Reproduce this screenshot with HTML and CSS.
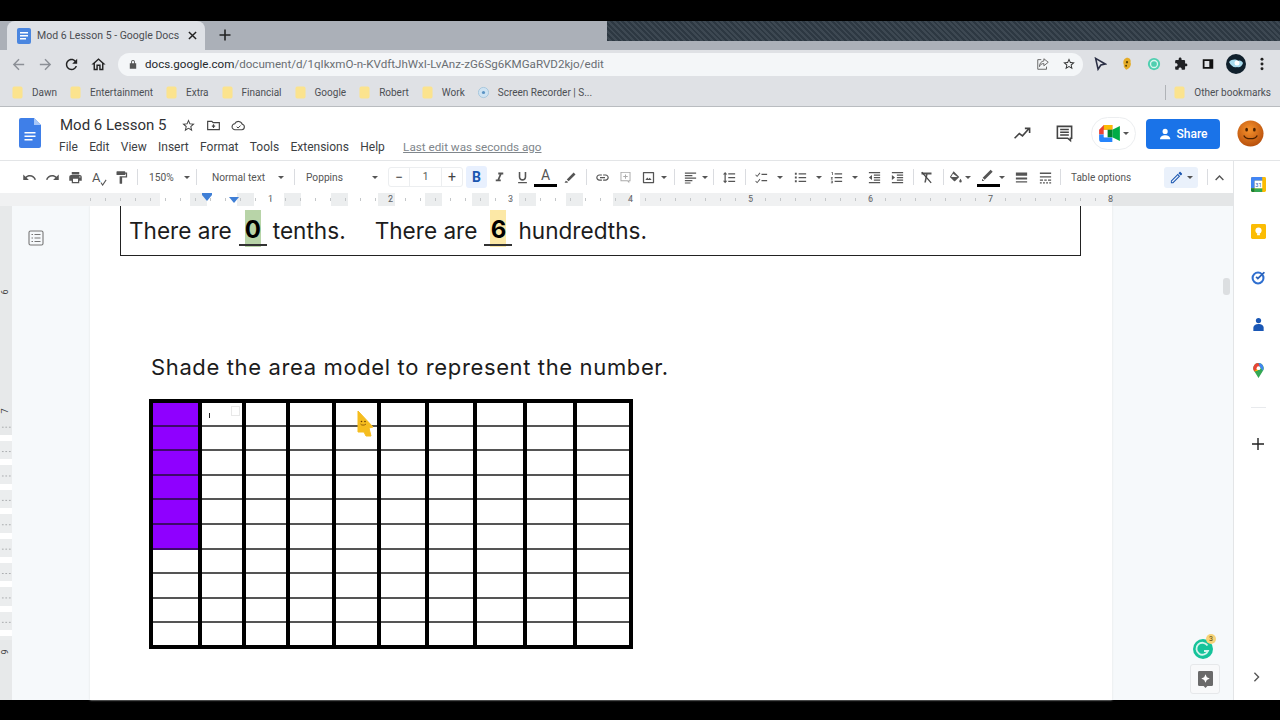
FILE: index.html
```html
<!DOCTYPE html>
<html>
<head>
  <meta charset="UTF-8">
  <title>Mod 6 Lesson 5 - Google Docs</title>
  <link rel="stylesheet" href="styles.css">
</head>
<body>
  <svg class="defs" width="0" height="0">
    <symbol id="i-folder" viewBox="0 0 12 14"><rect x="0.5" y="0.5" width="11" height="13" rx="2" fill="#fbe38e"/></symbol>
    <symbol id="i-undo" viewBox="0 0 24 24"><path d="M12.5 8c-2.65 0-5.05.99-6.9 2.6L2 7v9h9l-3.62-3.62c1.39-1.16 3.16-1.88 5.12-1.88 3.54 0 6.55 2.31 7.6 5.5l2.37-.78C21.08 11.03 17.15 8 12.5 8z"/></symbol>
    <symbol id="i-redo" viewBox="0 0 24 24"><path d="M18.4 10.6C16.55 8.99 14.15 8 11.5 8c-4.65 0-8.58 3.03-9.96 7.22L3.9 16c1.05-3.19 4.05-5.5 7.6-5.5 1.95 0 3.73.72 5.12 1.88L13 16h9V7l-3.6 3.6z"/></symbol>
    <symbol id="i-print" viewBox="0 0 24 24"><path d="M19 8H5c-1.66 0-3 1.34-3 3v6h4v4h12v-4h4v-6c0-1.66-1.34-3-3-3zm-3 11H8v-5h8v5zm3-7c-.55 0-1-.45-1-1s.45-1 1-1 1 .45 1 1-.45 1-1 1zm-1-9H6v4h12V3z"/></symbol>
    <symbol id="i-rlist" viewBox="0 0 24 24"><path d="M9 5h12v2H9zM9 11h12v2H9zM9 17h12v2H9zM3 4.5h3v3H3zM3 10.5h3v3H3zM3 16.5h3v3H3z"/></symbol>
  </svg>

  <div class="tabstrip">
    <div class="tab">
      <svg class="tab-icon" viewBox="0 0 14 16"><rect width="14" height="16" rx="2" fill="#4a86e0"/><path d="M3 4h8v1.4H3zM3 7h8v1.4H3zM3 10h6v1.4H3z" fill="#fff"/></svg>
      <span class="tab-title">Mod 6 Lesson 5 - Google Docs</span>
      <svg class="tab-close" viewBox="0 0 10 10"><path d="M1 1l8 8M9 1l-8 8" stroke="#222" stroke-width="1.6"/></svg>
    </div>
    <svg class="tab-plus" viewBox="0 0 12 12"><path d="M6 .5v11M.5 6h11" stroke="#222" stroke-width="1.6"/></svg>
    <div class="hatch"></div>
  </div>

  <div class="navbar">
    <svg class="nav-icon dim" viewBox="0 0 24 24"><path d="M20 11H7.83l5.59-5.59L12 4l-8 8 8 8 1.41-1.41L7.83 13H20v-2z"/></svg>
    <svg class="nav-icon dim" viewBox="0 0 24 24"><path d="M12 4l-1.41 1.41L16.17 11H4v2h12.17l-5.58 5.59L12 20l8-8z"/></svg>
    <svg class="nav-icon" viewBox="0 0 24 24"><path d="M17.65 6.35C16.2 4.9 14.21 4 12 4c-4.42 0-7.99 3.58-7.99 8s3.57 8 7.99 8c3.73 0 6.84-2.55 7.73-6h-2.08c-.82 2.33-3.04 4-5.65 4-3.31 0-6-2.69-6-6s2.69-6 6-6c1.66 0 3.14.69 4.22 1.78L13 11h7V4l-2.35 2.35z"/></svg>
    <svg class="nav-icon" viewBox="0 0 24 24"><path d="M12 5.69l5 4.5V18h-2v-6H9v6H7v-7.81l5-4.5M12 3L2 12h3v8h6v-6h2v6h6v-8h3L12 3z"/></svg>
    <div class="omnibox">
      <svg class="lock" viewBox="0 0 10 12"><path d="M2.5 5V3.5a2.5 2.5 0 015 0V5H9v7H1V5zM3.6 5h2.8V3.5a1.4 1.4 0 00-2.8 0z" fill="#555"/></svg>
      <span class="url"><b>docs.google.com</b>/document/d/1qIkxmO-n-KVdftJhWxI-LvAnz-zG6Sg6KMGaRVD2kjo/edit</span>
      <svg class="omni-icon" viewBox="0 0 16 16"><path d="M9 2l5 4-5 4V7.5C6 7.5 4.5 9 4 11c0-4 2-6 5-6.5zM6 3H2v11h10v-3" fill="none" stroke="#666" stroke-width="1.1"/></svg>
      <svg class="omni-icon" viewBox="0 0 24 24"><path d="M22 9.24l-7.19-.62L12 2 9.19 8.63 2 9.24l5.46 4.73L5.82 21 12 17.27 18.18 21l-1.63-7.03L22 9.24zM12 15.4l-3.76 2.27 1-4.28-3.32-2.88 4.38-.38L12 6.1l1.71 4.04 4.38.38-3.32 2.88 1 4.28L12 15.4z" fill="#333"/></svg>
    </div>
    <div class="extensions">
      <svg class="ext" viewBox="0 0 16 16"><path d="M3 1.5l11 6.5-5 1.2L5.8 14z" fill="none" stroke="#2b2f45" stroke-width="1.8"/></svg>
      <svg class="ext" viewBox="0 0 16 16"><path d="M7 1c4-.5 6 2.5 5 5 1.5 3-1 7.5-5 8.5-1-2-3.5-3-2.5-5.5C3 6 4 2 7 1z" fill="#e5ac27"/><circle cx="8" cy="6" r="1.3" fill="#5b4300"/><circle cx="7" cy="10" r="1.1" fill="#5b4300"/></svg>
      <svg class="ext" viewBox="0 0 16 16"><circle cx="8" cy="8" r="7" fill="#4fcfb0"/><circle cx="8" cy="8" r="4" fill="none" stroke="#d8f6ee" stroke-width="1.5"/></svg>
      <svg class="ext" viewBox="0 0 24 24"><path d="M20.5 11H19V7c0-1.1-.9-2-2-2h-4V3.5C13 2.12 11.88 1 10.5 1S8 2.12 8 3.5V5H4c-1.1 0-1.99.9-1.99 2v3.8H3.5c1.49 0 2.7 1.21 2.7 2.7s-1.21 2.7-2.7 2.7H2V20c0 1.1.9 2 2 2h3.8v-1.5c0-1.49 1.21-2.7 2.7-2.7 1.49 0 2.7 1.21 2.7 2.7V22H17c1.1 0 2-.9 2-2v-4h1.5c1.38 0 2.5-1.12 2.5-2.5S21.88 11 20.5 11z" fill="#202124"/></svg>
      <svg class="ext" viewBox="0 0 16 16"><path d="M2 2.5h12v11H2zM9.5 4.5H4v7h5.5z" fill="#111" fill-rule="evenodd"/></svg>
      <svg class="ext profile" viewBox="0 0 20 20"><circle cx="10" cy="10" r="10" fill="#10202c"/><path d="M3 8c3-3 7-3 9-1 2-1 4 0 5 2-1 3-3 5-6 4-3 1-6-1-8-5z" fill="#a9dcee"/><circle cx="11" cy="9" r="2.5" fill="#fff"/></svg>
      <svg class="ext kebab" viewBox="0 0 4 16"><circle cx="2" cy="2.5" r="1.7" fill="#222"/><circle cx="2" cy="8" r="1.7" fill="#222"/><circle cx="2" cy="13.5" r="1.7" fill="#222"/></svg>
    </div>
  </div>

  <div class="bookmarks">
    <a class="mark"><svg><use href="#i-folder"/></svg>Dawn</a>
    <a class="mark"><svg><use href="#i-folder"/></svg>Entertainment</a>
    <a class="mark"><svg><use href="#i-folder"/></svg>Extra</a>
    <a class="mark"><svg><use href="#i-folder"/></svg>Financial</a>
    <a class="mark"><svg><use href="#i-folder"/></svg>Google</a>
    <a class="mark"><svg><use href="#i-folder"/></svg>Robert</a>
    <a class="mark"><svg><use href="#i-folder"/></svg>Work</a>
    <a class="mark"><svg viewBox="0 0 14 14"><circle cx="7" cy="7" r="6.5" fill="#cfe3f2" stroke="#9cc0da"/><circle cx="7" cy="7" r="2" fill="#5b93c4"/></svg>Screen Recorder | S...</a>
    <span class="mark-sep"></span>
    <a class="mark last"><svg><use href="#i-folder"/></svg>Other bookmarks</a>
  </div>

  <header class="doc-header">
    <svg class="doc-logo" viewBox="0 0 22 30"><path d="M2 0h13l7 7v21a2 2 0 01-2 2H2a2 2 0 01-2-2V2a2 2 0 012-2z" fill="#3f7fe8"/><path d="M15 0l7 7h-7z" fill="#a9c7f7"/><path d="M5.5 14h11v1.6h-11zM5.5 17.5h11v1.6h-11zM5.5 21h8v1.6h-8z" fill="#fff"/></svg>
    <div class="doc-meta">
      <div class="doc-title-row">
        <span class="doc-title">Mod 6 Lesson 5</span>
        <svg class="title-icon" viewBox="0 0 24 24"><path d="M22 9.24l-7.19-.62L12 2 9.19 8.63 2 9.24l5.46 4.73L5.82 21 12 17.27 18.18 21l-1.63-7.03L22 9.24zM12 15.4l-3.76 2.27 1-4.28-3.32-2.88 4.38-.38L12 6.1l1.71 4.04 4.38.38-3.32 2.88 1 4.28L12 15.4z" fill="#444"/></svg>
        <svg class="title-icon" viewBox="0 0 18 18"><path d="M2 4h5l1.5 1.5H16V14H2z" fill="none" stroke="#444" stroke-width="1.4"/><path d="M9 7.5v4.5M7 9.7h4" stroke="#444" stroke-width="1.4"/></svg>
        <svg class="title-icon" viewBox="0 0 18 18"><path d="M5 14a3.5 3.5 0 01-.5-7 4.8 4.8 0 019 .5 3.3 3.3 0 01-.5 6.5z" fill="none" stroke="#444" stroke-width="1.3"/><path d="M6.8 10.5l1.7 1.5 3-3" fill="none" stroke="#444" stroke-width="1.2"/></svg>
      </div>
      <nav class="menu">
        <span>File</span><span>Edit</span><span>View</span><span>Insert</span><span>Format</span><span>Tools</span><span>Extensions</span><span>Help</span>
        <a class="last-edit">Last edit was seconds ago</a>
      </nav>
    </div>
    <div class="doc-actions">
      <svg class="act-icon" viewBox="0 0 24 24"><path d="M2 18l6-6 4 3 8-9M15 5.5h6v6" fill="none" stroke="#444" stroke-width="2"/></svg>
      <svg class="act-icon comment" viewBox="0 0 24 24"><path d="M3 3h18v15h-1.5v3L16 18H3z" fill="none" stroke="#444" stroke-width="2"/><path d="M6.5 7h11M6.5 10.5h11M6.5 14h11" stroke="#444" stroke-width="1.8"/></svg>
      <div class="meet">
        <svg viewBox="0 0 22 18" class="meet-logo"><path d="M0 5l5-5h9v5H5v5H0z" fill="#ea4335"/><path d="M0 10h5v3h9v5H3a3 3 0 01-3-3z" fill="#2684fc"/><path d="M5 5h9v8H5z" fill="#fff"/><path d="M5 0h9v5H5z" fill="#fbbc04"/><path d="M14 5l8-4v16l-8-4z" fill="#00ac47"/><path d="M9 5h5v8H9z" fill="#00832d"/></svg>
        <i class="caret"></i>
      </div>
      <button class="share">
        <svg viewBox="0 0 16 14"><circle cx="7" cy="4" r="3" fill="#fff"/><path d="M1 13c0-3 3-4.5 6-4.5S13 10 13 13z" fill="#fff"/></svg>
        Share
      </button>
      <svg class="avatar" viewBox="0 0 28 28">
        <defs><radialGradient id="smile" cx="45%" cy="35%" r="65%"><stop offset="0" stop-color="#f7922c"/><stop offset="1" stop-color="#b8500c"/></radialGradient></defs>
        <circle cx="14" cy="14" r="13.5" fill="url(#smile)"/>
        <ellipse cx="10" cy="10" rx="1.4" ry="2" fill="#4a2000"/><ellipse cx="18" cy="10" rx="1.4" ry="2" fill="#4a2000"/>
        <path d="M7 16c2 4.5 12 4.5 14 0" fill="none" stroke="#4a2000" stroke-width="1.4"/>
      </svg>
    </div>
  </header>

  <div class="toolbar">
    <svg class="tb"><use href="#i-undo"/></svg>
    <svg class="tb"><use href="#i-redo"/></svg>
    <svg class="tb"><use href="#i-print"/></svg>
    <span class="tb spell">A<svg viewBox="0 0 8 8"><path d="M1 4l2 3 4-6" fill="none" stroke="#555" stroke-width="1.2"/></svg></span>
    <svg class="tb" viewBox="0 0 24 24"><path d="M18 4V3a1 1 0 00-1-1H5a1 1 0 00-1 1v4a1 1 0 001 1h12a1 1 0 001-1V6h1v4H9v11a1 1 0 001 1h2a1 1 0 001-1v-9h8V4z"/></svg>
    <i class="sep"></i>
    <div class="pick p-zoom"><span>150%</span><i class="caret"></i></div>
    <i class="sep"></i>
    <div class="pick p-style"><span>Normal text</span><i class="caret"></i></div>
    <i class="sep"></i>
    <div class="pick p-font"><span>Poppins</span><i class="caret"></i></div>
    <div class="size-box">
      <span class="size-btn">&minus;</span><span class="size-val">1</span><span class="size-btn">+</span>
    </div>
    <span class="tb fmt bold">B</span>
    <svg class="tb" viewBox="0 0 24 24"><path d="M10 4v3h2.21l-3.42 8H6v3h8v-3h-2.21l3.42-8H18V4z"/></svg>
    <svg class="tb" viewBox="0 0 24 24"><path d="M12 17c3.31 0 6-2.69 6-6V3h-2.5v8c0 1.93-1.57 3.5-3.5 3.5S8.5 12.93 8.5 11V3H6v8c0 3.31 2.69 6 6 6zm-7 2v2h14v-2H5z"/></svg>
    <span class="tb text-color">A</span>
    <svg class="tb marker" viewBox="0 0 24 24"><path d="M6 15l3 3 11-11-3-3zM4.5 17l-2 3.5h4.5l1.2-1.2z"/></svg>
    <i class="sep"></i>
    <svg class="tb" viewBox="0 0 24 24"><path d="M3.9 12c0-1.71 1.39-3.1 3.1-3.1h4V7H7c-2.76 0-5 2.24-5 5s2.24 5 5 5h4v-1.9H7c-1.71 0-3.1-1.39-3.1-3.1zM8 13h8v-2H8v2zm9-6h-4v1.9h4c1.71 0 3.1 1.39 3.1 3.1s-1.39 3.1-3.1 3.1h-4V17h4c2.76 0 5-2.24 5-5s-2.24-5-5-5z"/></svg>
    <svg class="tb faint" viewBox="0 0 24 24"><path d="M4 3h16v15h-2v3l-3-3H4zM5.5 4.5v12h10.1l1 1v-1h1.9v-12zM11.2 7h1.6v2.7h2.7v1.6h-2.7V14h-1.6v-2.7H8.5V9.700h2.7z" fill-rule="evenodd"/></svg>
    <svg class="tb" viewBox="0 0 24 24"><path d="M4 3h16a1 1 0 011 1v16a1 1 0 01-1 1H4a1 1 0 01-1-1V4a1 1 0 011-1zm1 2v14h14V5zM7 16l3-4 2 2.5 2-2 3 3.5z" fill-rule="evenodd"/></svg>
    <i class="caret solo"></i>
    <i class="sep"></i>
    <svg class="tb" viewBox="0 0 24 24"><path d="M3 4h18v2H3zM3 8h12v2H3zM3 12h18v2H3zM3 16h12v2H3zM3 20h9v1.5H3z"/></svg>
    <i class="caret solo tight"></i>
    <i class="sep"></i>
    <svg class="tb" viewBox="0 0 24 24"><path d="M10 5h11v2H10zM10 11h11v2H10zM10 17h11v2H10zM5 3l3.5 4H6v10h2.5L5 21l-3.5-4H4V7H1.5z"/></svg>
    <i class="sep"></i>
    <svg class="tb" viewBox="0 0 24 24"><path d="M12 6h9v2h-9zM12 16h9v2h-9zM3 7l2 2 4-5 1.2 1L5 11 2 8zM3 17l2 2 4-5 1.2 1L5 21l-3-3z"/></svg>
    <i class="caret c-check"></i>
    <svg class="tb"><use href="#i-rlist"/></svg>
    <i class="caret c-bullet"></i>
    <svg class="tb" viewBox="0 0 24 24"><path d="M9 5h12v2H9zM9 11h12v2H9zM9 17h12v2H9zM4 3h2v5H4.800V4.200H4zM3 11h3v1l-1.800 1.600H6V15H3v-1l1.800-1.700H3zM3 17h3v4H3v-1h1.800v-.5H4v-1h.8V18H3z"/></svg>
    <i class="caret c-number"></i>
    <svg class="tb" viewBox="0 0 24 24"><path d="M3 3h18v2H3zM11 7h10v2H11zM11 11h10v2H11zM11 15h10v2H11zM3 19h18v2H3zM8 8v8l-5-4z"/></svg>
    <svg class="tb" viewBox="0 0 24 24"><path d="M3 3h18v2H3zM11 7h10v2H11zM11 11h10v2H11zM11 15h10v2H11zM3 19h18v2H3zM3 8v8l5-4z"/></svg>
    <i class="sep s-clear"></i>
    <svg class="tb" viewBox="0 0 24 24"><path d="M4 4h16v3h-6.3L11 20H8.500l2.700-13H4z"/><path d="M4.500 3.500l15 17" stroke="#444" stroke-width="2"/></svg>
    <i class="sep s-fill"></i>
    <svg class="tb" viewBox="0 0 24 24"><path d="M9 2l9 9-6.500 6.500a1.500 1.500 0 01-2 0L3 11zM7 5l1 1-3 5h10.200zM20 14s2 2.500 2 4a2 2 0 01-4 0c0-1.500 2-4 2-4z" fill-rule="evenodd"/></svg>
    <i class="caret c-fill"></i>
    <span class="tb border-color"><svg viewBox="0 0 24 24"><path d="M4 16l3 3 12-12-3-3zM3 17.500V21h3.500z"/></svg></span>
    <i class="caret c-border"></i>
    <svg class="tb" viewBox="0 0 24 24"><path d="M3 4h18v5H3zM3 12h18v3H3zM3 18h18v2H3z"/></svg>
    <svg class="tb dash" viewBox="0 0 24 24"><path d="M3 4h18v2.500H3zM3 10h18v2H3zM3 15h5v2H3zM10 15h4v2h-4zM16 15h5v2h-5zM3 19.500h3v2H3zM8 19.500h3v2H8zM13 19.500h3v2h-3zM18 19.500h3v2h-3z"/></svg>
    <i class="sep s-table"></i>
    <span class="table-options">Table options</span>
    <div class="mode">
      <svg viewBox="0 0 24 24"><path d="M3 17.250V21h3.750L17.810 9.940l-3.750-3.750L3 17.250zM5.900 19.500H4.500v-1.400l9.560-9.560 1.400 1.400zM20.710 7.040c.39-.39.39-1.020 0-1.410l-2.340-2.340c-.39-.39-1.020-.39-1.410 0l-1.830 1.830 3.750 3.750 1.830-1.830z" fill="#1a56b0"/></svg>
      <i class="caret"></i>
    </div>
    <i class="sep s-mode"></i>
    <svg class="tb" viewBox="0 0 24 24"><path d="M12 8l-7 7 1.600 1.600L12 11.200l5.400 5.400L19 15z"/></svg>
  </div>

  <div class="ruler">
    <div class="ruler-marks"><span>1</span><span>2</span><span>3</span><span>4</span><span>5</span><span>6</span><span>7</span><span>8</span></div>
    <i class="indent ind-a"></i>
    <i class="indent ind-b"></i>
  </div>

  <main class="workspace">
    <div class="vruler">
      <span class="vnum v6">6</span>
      <span class="vnum v7">7</span>
      <span class="vnum v9">9</span>
    </div>
    <div class="gutter">
      <svg class="outline-btn" viewBox="0 0 16 16"><rect x="1" y="1" width="14" height="14" rx="1.5" fill="none" stroke="#777" stroke-width="1.1"/><path d="M3.5 4.5h1.5M6.5 4.5h6M3.5 8h1.5M6.5 8h6M3.5 11.5h1.5M6.5 11.5h6" stroke="#777" stroke-width="1.1"/></svg>
    </div>
    <section class="page">
      <div class="answer-box">
        <span class="answer-text">There are</span>
        <span class="blank"><b class="digit green">0</b></span>
        <span class="answer-text">tenths.</span>
        <span class="answer-text second">There are</span>
        <span class="blank"><b class="digit yellow">6</b></span>
        <span class="answer-text">hundredths.</span>
      </div>
      <h2 class="prompt">Shade the area model to represent the number.</h2>
      <div class="model-wrap">
        <table class="model">
          <colgroup><col><col><col><col><col><col><col><col><col><col></colgroup>
          <tr><td class="on"></td><td class="typing"><i class="caret-i"></i><i class="cell-menu"></i></td><td></td><td></td><td></td><td></td><td></td><td></td><td></td><td></td></tr>
          <tr><td class="on"></td><td></td><td></td><td></td><td></td><td></td><td></td><td></td><td></td><td></td></tr>
          <tr><td class="on"></td><td></td><td></td><td></td><td></td><td></td><td></td><td></td><td></td><td></td></tr>
          <tr><td class="on"></td><td></td><td></td><td></td><td></td><td></td><td></td><td></td><td></td><td></td></tr>
          <tr><td class="on"></td><td></td><td></td><td></td><td></td><td></td><td></td><td></td><td></td><td></td></tr>
          <tr><td class="on"></td><td></td><td></td><td></td><td></td><td></td><td></td><td></td><td></td><td></td></tr>
          <tr><td></td><td></td><td></td><td></td><td></td><td></td><td></td><td></td><td></td><td></td></tr>
          <tr><td></td><td></td><td></td><td></td><td></td><td></td><td></td><td></td><td></td><td></td></tr>
          <tr><td></td><td></td><td></td><td></td><td></td><td></td><td></td><td></td><td></td><td></td></tr>
          <tr><td></td><td></td><td></td><td></td><td></td><td></td><td></td><td></td><td></td><td></td></tr>
        </table>
        <svg class="star-cursor" viewBox="0 0 18 28">
          <path d="M1 1l15 16-4 1 2 8h-5l-2-4H1z" fill="#f5bd1f" stroke="#f5bd1f" stroke-linejoin="round"/>
          <circle cx="4.5" cy="11.5" r="0.8" fill="#6b3c00"/><circle cx="8" cy="11.5" r="0.8" fill="#6b3c00"/>
          <path d="M3.5 14c1 1.5 4 1.5 5.5 0" fill="none" stroke="#6b3c00" stroke-width="0.7"/>
        </svg>
      </div>
    </section>
    <div class="right-gutter">
      <i class="scroll-thumb"></i>
      <div class="grammarly">
        <svg viewBox="0 0 20 20"><circle cx="10" cy="10" r="10" fill="#15c39a"/><path d="M14.5 6.5A6 6 0 1015 12h-4" fill="none" stroke="#d3f5ec" stroke-width="1.8"/></svg>
        <span class="g-badge">3</span>
      </div>
      <div class="explore">
        <svg viewBox="0 0 16 18"><path d="M1.5 0h13A1.5 1.5 0 0116 1.5v13a1.5 1.5 0 01-1.5 1.5H10l-2 2-2-2H1.5A1.5 1.5 0 010 14.5v-13A1.5 1.5 0 011.5 0z" fill="#6a6a6a"/><path d="M8 3.5l1.4 3.1L12.5 8l-3.1 1.4L8 12.5 6.6 9.4 3.5 8l3.1-1.4z" fill="#fff"/></svg>
      </div>
    </div>
    <aside class="sidepanel">
      <svg class="side-icon" viewBox="0 0 16 16"><rect width="16" height="16" rx="1.5" fill="#fbbc04"/><path d="M0 1.5A1.5 1.5 0 011.5 0H12v4H4v8H0z" fill="#4285f4"/><path d="M0 12h4v4H1.5A1.5 1.5 0 010 14.5z" fill="#188038"/><path d="M4 12h8v4H4z" fill="#34a853"/><rect x="4" y="4" width="8" height="8" fill="#fff"/><text x="8" y="10.6" class="cal-num">31</text></svg>
      <svg class="side-icon" viewBox="0 0 16 16"><rect width="16" height="16" rx="1.5" fill="#fbbc04"/><circle cx="8" cy="7" r="3.3" fill="#fff"/><rect x="6.5" y="10" width="3" height="2" fill="#fff"/></svg>
      <svg class="side-icon" viewBox="0 0 16 16"><circle cx="7.5" cy="8.5" r="5.8" fill="none" stroke="#2f6fd0" stroke-width="2.2"/><path d="M4.8 8l2.5 2.5L15 3l-1.5-1.2-6.2 5.8-1.2-1z" fill="#2b62b8"/></svg>
      <svg class="side-icon" viewBox="0 0 16 16"><circle cx="8" cy="3.8" r="2.8" fill="#1a57b5"/><path d="M2.5 15v-3.5C2.5 9 5 7.5 8 7.5s5.5 1.5 5.5 4V15z" fill="#1a57b5"/></svg>
      <svg class="side-icon" viewBox="0 0 16 16"><path d="M8 0a5.5 5.5 0 00-4.300 9L8 16l4.300-7A5.500 5.500 0 008 0z" fill="#34a853"/><path d="M3.700 9A5.500 5.500 0 018 0l1.500 4-3 4z" fill="#ea4335"/><path d="M8 0a5.500 5.500 0 014.500 8.300L9.500 4z" fill="#4285f4"/><path d="M3.700 9l2.800-3.200 1 2.200z" fill="#fbbc04"/><circle cx="8" cy="5.500" r="2" fill="#fff"/></svg>
      <i class="side-rule"></i>
      <svg class="side-plus" viewBox="0 0 12 12"><path d="M6 0v12M0 6h12" stroke="#222" stroke-width="1.4"/></svg>
      <svg class="side-more" viewBox="0 0 8 12"><path d="M1.500 1l5 5-5 5" fill="none" stroke="#555" stroke-width="1.6"/></svg>
    </aside>
  </main>
</body>
</html>
```
FILE: styles.css
```css
* {
  box-sizing: border-box;
}

body {
  margin: 0;
  width: 1280px;
  height: 720px;
  overflow: hidden;
  background-color: #000;
  padding-top: 21px;
  padding-bottom: 20px;
  font-family: Roboto, "Liberation Sans", sans-serif;
  color: #3c4043;
}

.defs {
  position: absolute;
}

/* browser chrome */
.tabstrip {
  display: flex;
  height: 29px;
  background-color: #abb0b8;
  padding-left: 7px;
}

.tab {
  display: flex;
  align-items: center;
  width: 198px;
  padding: 0 8px 0 10px;
  background-color: #dee1e6;
  border-radius: 8px 8px 0 0;
}

.tab-icon {
  flex: none;
  width: 14px;
  height: 16px;
}

.tab-title {
  flex: 1;
  margin-left: 6px;
  font-size: 10.5px;
  color: #4a4d52;
  white-space: nowrap;
}

.tab-close {
  flex: none;
  width: 9px;
  height: 9px;
}

.tab-plus {
  width: 12px;
  height: 12px;
  margin: 8px 0 0 14px;
}

.hatch {
  width: 673px;
  height: 20px;
  margin-left: auto;
  background: repeating-linear-gradient(45deg, #2d3842, #2d3842 2px, #3d4852 2px, #3d4852 4px);
}

.navbar {
  display: flex;
  align-items: center;
  height: 28px;
  padding-left: 10px;
  background-color: #dfe1e5;
}

.nav-icon {
  flex: none;
  width: 17px;
  height: 17px;
  margin-right: 9.5px;
  fill: #222;
}

.nav-icon.dim {
  fill: #8b8f96;
}

.omnibox {
  display: flex;
  flex: none;
  align-items: center;
  width: 965px;
  height: 23px;
  margin-left: 2px;
  padding: 0 7px 0 11px;
  background-color: #f4f6f8;
  border-radius: 12px;
}

.lock {
  width: 8px;
  height: 10px;
}

.url {
  flex: 1;
  margin-left: 8px;
  font-size: 11.6px;
  color: #6a6e73;
  white-space: nowrap;
}

.url b {
  font-weight: 400;
  color: #25282c;
}

.omni-icon {
  width: 14px;
  height: 14px;
  margin-left: 12px;
}

.extensions {
  display: flex;
  flex: none;
  align-items: center;
  margin-left: 10px;
}

.ext {
  flex: none;
  width: 14px;
  height: 14px;
  margin-right: 13px;
}

.profile {
  width: 20px;
  height: 20px;
  margin-left: -2px;
  margin-right: 14px;
}

.kebab {
  width: 4px;
  margin: 0;
}

.bookmarks {
  display: flex;
  align-items: center;
  height: 29px;
  padding-left: 12px;
  background-color: #dfe1e5;
  border-bottom: 1px solid #b9bcc0;
  font-size: 10px;
  color: #4c4f54;
}

.mark {
  display: flex;
  align-items: center;
  margin-right: 13px;
  white-space: nowrap;
}

.mark svg {
  width: 11px;
  height: 13px;
  margin-right: 9px;
}

.mark-sep {
  width: 1px;
  height: 15px;
  margin-left: auto;
  margin-right: 8px;
  background-color: #b0b3b7;
}

.mark.last {
  margin-right: 9px;
}

/* docs header */
.doc-header {
  display: flex;
  height: 54px;
  padding-left: 19px;
  background-color: #fff;
  border-bottom: 1px solid #e3e5e7;
}

.doc-logo {
  width: 22px;
  height: 30px;
  margin-top: 11px;
}

.doc-meta {
  margin-left: 18px;
}

.doc-title-row {
  display: flex;
  align-items: center;
  height: 20px;
  margin-top: 8px;
  padding-left: 1px;
}

.doc-title {
  font-size: 15px;
  color: #303134;
  width: 121px;
}

.title-icon {
  width: 15px;
  height: 15px;
  margin-right: 10px;
}

.menu {
  display: flex;
  align-items: center;
  margin-top: 5px;
  font-size: 12px;
  color: #3c4043;
}

.menu span {
  margin-right: 11.3px;
}

.last-edit {
  margin-left: 7px;
  font-size: 11.7px;
  color: #80868b;
  text-decoration: underline;
}

.doc-actions {
  display: flex;
  align-items: center;
  margin-left: auto;
  padding-right: 16px;
}

.act-icon {
  width: 19px;
  height: 19px;
  margin-right: 23px;
}

.comment {
  margin-right: 17px;
}

.meet {
  display: flex;
  align-items: center;
  justify-content: center;
  width: 45px;
  height: 33px;
  border: 1px solid #eceef0;
  border-radius: 17px;
}

.meet-logo {
  width: 21px;
  height: 17px;
}

.share {
  display: flex;
  align-items: center;
  justify-content: center;
  width: 74px;
  height: 30px;
  margin-left: 10px;
  background-color: #1a73e8;
  border: none;
  border-radius: 4px;
  color: #fff;
  font-family: Roboto, sans-serif;
  font-size: 12px;
  font-weight: 500;
}

.share svg {
  width: 14px;
  height: 12px;
  margin-right: 4px;
}

.avatar {
  width: 27px;
  height: 27px;
  margin-left: 17px;
}

/* toolbar */
.toolbar {
  display: flex;
  align-items: center;
  height: 32px;
  padding-left: 18px;
  background-color: #fff;
  font-size: 10.2px;
  color: #555;
}

.tb {
  flex: none;
  width: 23px;
  height: 15px;
  fill: #555;
}

.tb.faint {
  fill: #aaa;
}

.tb.marker {
  margin-left: 2px;
}

.tb.dash {
  margin-left: 1px;
}

.sep {
  flex: none;
  width: 1px;
  height: 16px;
  margin: 0 4px;
  background-color: #dadce0;
}

.s-clear { margin-right: 0.5px; }
.s-fill { margin: 0 0 0 5px; }
.s-table { margin: 0 0 0 3.5px; }
.s-mode { margin: 0 0 0 9px; }

.caret {
  flex: none;
  width: 0;
  height: 0;
  margin-left: 3px;
  border-left: 3px solid transparent;
  border-right: 3px solid transparent;
  border-top: 3px solid #555;
}

.caret.solo {
  margin: 0 3px 0 1px;
}

.caret.solo.tight {
  margin: 0 1px 0 0;
}

.caret.c-check { margin: 0 6px 0 4px; }
.caret.c-bullet { margin: 0 3.5px; }
.caret.c-number { margin: 0 5.5px 0 3.5px; }
.caret.c-fill { margin: 0 5.5px 0 -1.5px; }
.caret.c-border { margin: 0 4.5px 0 -0.5px; }

.pick {
  display: flex;
  align-items: center;
  justify-content: space-between;
  flex: none;
}

.p-zoom { width: 50px; padding: 0 2px 0 7px; }
.p-style { width: 89px; padding: 0 6px 0 11px; }
.p-font { width: 85px; padding: 0 6px 0 7px; }

.size-box {
  display: flex;
  flex: none;
  height: 20px;
  margin: 0 3px 0 4px;
  border: 1px solid #eceef0;
  border-radius: 3px;
  align-items: center;
}

.size-btn {
  width: 20px;
  text-align: center;
  font-size: 14px;
  color: #444;
}

.size-val {
  width: 33px;
  height: 18px;
  line-height: 18px;
  text-align: center;
  border-left: 1px solid #eceef0;
  border-right: 1px solid #eceef0;
}

.fmt.bold {
  width: 21px;
  height: 22px;
  margin-right: 1px;
  line-height: 22px;
  text-align: center;
  border-radius: 3px;
  background-color: #e8f0fe;
  color: #1a56b0;
  font-size: 14px;
  font-weight: 700;
}

.spell {
  position: relative;
  font-size: 13px;
  line-height: 15px;
  padding-left: 5px;
}

.spell svg {
  position: absolute;
  left: 13px;
  top: 9px;
  width: 7px;
  height: 7px;
}

.text-color {
  height: 20px;
  line-height: 17px;
  text-align: center;
  font-size: 14px;
  box-shadow: inset 0 -3px 0 #000, inset 3px 0 0 #fff, inset -3px 0 0 #fff;
}

.border-color {
  height: 20px;
  padding: 0 3px;
  box-shadow: inset 0 -3px 0 #000, inset 3px 0 0 #fff, inset -3px 0 0 #fff;
}

.border-color svg {
  width: 16px;
  height: 16px;
  fill: #555;
}

.table-options {
  flex: none;
  margin: 0 33px 0 10px;
  font-size: 10px;
  white-space: nowrap;
}

.mode {
  display: flex;
  flex: none;
  align-items: center;
  justify-content: center;
  width: 34px;
  height: 21px;
  background-color: #eaf1fb;
  border-radius: 3px;
}

.mode svg {
  width: 15px;
  height: 15px;
}

/* horizontal ruler */
.ruler {
  position: relative;
  height: 13px;
  background:
    linear-gradient(to right, transparent 1112px, #e4e6e7 1112px, #e4e6e7 1233px, #fff 1233px),
    repeating-linear-gradient(to right, #c4c7c9 0, #c4c7c9 1px, transparent 1px, transparent 15px) 90px 5px / 1022px 3px no-repeat,
    repeating-linear-gradient(to right, #fff 0, #fff 30px, #eceeef 30px, #eceeef 47px) 160px 0 / 480px 100% no-repeat,
    linear-gradient(#f0f1f2, #f0f1f2);
  font-size: 9px;
  color: #5f6368;
}

.ruler-marks {
  display: flex;
  padding-left: 210px;
  line-height: 13px;
}

.ruler-marks span {
  width: 120px;
  text-align: right;
  padding-right: 57px;
}

.indent {
  position: absolute;
  top: 2px;
  width: 0;
  height: 0;
  border-left: 5px solid transparent;
  border-right: 5px solid transparent;
  border-top: 6px solid #3f7fd6;
}

.ind-a { left: 202px; box-shadow: 0 -2px 0 #3f7fd6; }
.ind-b { left: 229px; top: 4px; }

/* document area */
.workspace {
  display: flex;
  height: 494px;
  background-color: #f6f9fb;
}

.vruler {
  position: relative;
  flex: none;
  width: 12px;
  background:
    repeating-linear-gradient(#fff 0, #fff 6px, #ebedee 6px, #ebedee 24.4px) 0 229px / 100% 205px no-repeat,
    #e7e9ea;
  font-size: 9px;
  color: #444;
}

/* the little dotted ticks on the table rows */
.vruler::before {
  content: "";
  position: absolute;
  left: 1px;
  top: 209px;
  width: 10px;
  height: 220px;
  background: radial-gradient(circle, #a8abad 0.8px, transparent 1px) 0 0 / 3.5px 24.4px;
}

.vnum {
  position: absolute;
  left: 2px;
  transform: rotate(-90deg);
}

.v6 { top: 81px; }
.v7 { top: 200px; }
.v9 { top: 441px; }

.gutter {
  flex: none;
  width: 78px;
  padding: 24px 0 0 16px;
}

.outline-btn {
  width: 16px;
  height: 16px;
}

.page {
  flex: none;
  width: 1022px;
  padding-left: 30px;
  background-color: #fff;
  box-shadow: 0 0 2px #dfe2e4;
  font-family: Inter, "Liberation Sans", sans-serif;
  color: #1c1c1c;
}

.answer-box {
  display: flex;
  align-items: center;
  width: 961px;
  height: 50px;
  padding-left: 8px;
  border: solid #222;
  border-width: 0 1.5px 1.5px 1.5px;
}

.answer-text {
  font-size: 22.6px;
  white-space: nowrap;
}

.second {
  margin-left: 29px;
}

.blank {
  position: relative;
  display: flex;
  justify-content: center;
  width: 28px;
  margin: 0 6px 0 7px;
  height: 37px;
}

/* the answer line runs over the highlight */
.blank::after {
  content: "";
  position: absolute;
  left: 0;
  right: 0;
  top: 32px;
  height: 2px;
  background-color: #333;
}

.digit {
  width: 16px;
  height: 37px;
  line-height: 40px;
  text-align: center;
  font-size: 24px;
  font-weight: 700;
  color: #000;
  margin-top: -2px;
}

.green { background-color: #b8d4a8; }
.yellow { background-color: #fce8a6; }

.prompt {
  margin: 96px 0 0 31px;
  font-size: 22px;
  font-weight: 400;
  line-height: 30px;
  letter-spacing: 0.63px;
  white-space: nowrap;
}

.model-wrap {
  position: relative;
  margin: 17px 0 0 29px;
}

.model {
  table-layout: fixed;
  border-collapse: collapse;
  width: 484px;
  height: 250px;
  border: 4px solid #000;
}

.model td {
  height: 24.6px;
  padding: 0;
  border-top: 2px solid #555;
  border-bottom: 2px solid #555;
  border-left: 4px solid #000;
  border-right: 4px solid #000;
  background-color: #fff;
}

.model td.on {
  background-color: #8f00ff;
  border-top-color: #3f0a6b;
  border-bottom-color: #3f0a6b;
}

.model col:nth-child(1) { width: 49px; }
.model col:nth-child(2) { width: 44px; }
.model col:nth-child(3) { width: 44px; }
.model col:nth-child(4) { width: 46px; }
.model col:nth-child(5) { width: 45px; }
.model col:nth-child(6) { width: 48px; }
.model col:nth-child(7) { width: 48px; }
.model col:nth-child(8) { width: 50px; }
.model col:nth-child(9) { width: 50px; }
.model col:nth-child(10) { width: 56px; }

.typing {
  position: relative;
}

.caret-i {
  position: absolute;
  left: 7px;
  top: 10px;
  width: 1px;
  height: 5px;
  background-color: #222;
}

.cell-menu {
  position: absolute;
  right: 2px;
  top: 3px;
  width: 9px;
  height: 10px;
  border: 1px solid #e8e8e8;
}

.star-cursor {
  position: absolute;
  left: 208px;
  top: 11px;
  width: 18px;
  height: 28px;
}

.right-gutter {
  position: relative;
  flex: 1;
}

.scroll-thumb {
  position: absolute;
  left: 111px;
  top: 72px;
  width: 7px;
  height: 17px;
  border-radius: 3px;
  background-color: #dcdfe1;
}

.grammarly {
  position: absolute;
  left: 81px;
  top: 433px;
  width: 20px;
  height: 20px;
}

.g-badge {
  position: absolute;
  left: 13px;
  top: -5px;
  width: 10px;
  height: 10px;
  border-radius: 50%;
  background-color: #f7d479;
  font-size: 7px;
  line-height: 10px;
  text-align: center;
  color: #5a4300;
}

.explore {
  position: absolute;
  left: 78px;
  top: 458px;
  display: flex;
  align-items: center;
  justify-content: center;
  width: 30px;
  height: 30px;
  background-color: #f8f9fa;
  border: 1px solid #e6e8ea;
  border-radius: 3px;
}

.explore svg {
  width: 15px;
  height: 17px;
}

.sidepanel {
  position: relative;
  flex: none;
  display: flex;
  flex-direction: column;
  align-items: center;
  width: 47px;
  margin-top: -45px;
  height: 539px;
  padding: 16px 0 0 2px;
  background-color: #fff;
  border-left: 1px solid #e3e5e7;
}

.side-icon {
  flex: none;
  width: 15px;
  height: 15px;
  margin-bottom: 31.5px;
}

.cal-num {
  font-family: Roboto, sans-serif;
  font-size: 6px;
  text-anchor: middle;
  fill: #1a57b5;
}

.side-rule {
  width: 15px;
  height: 1px;
  margin-top: -3px;
  background-color: #e8eaed;
}

.side-plus {
  width: 12px;
  height: 12px;
  margin-top: 30px;
}

.side-more {
  position: absolute;
  left: 19px;
  top: 511px;
  width: 7px;
  height: 10px;
}
```
